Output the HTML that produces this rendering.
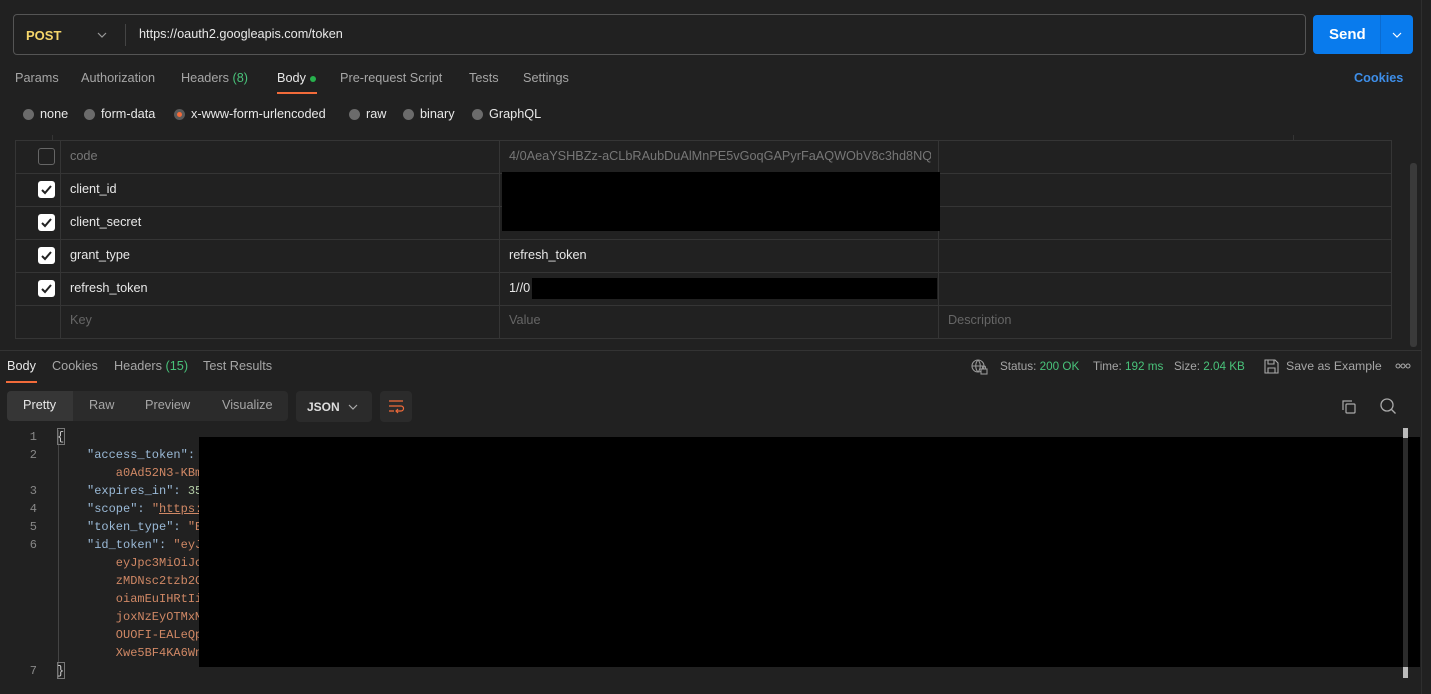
<!DOCTYPE html>
<html><head><meta charset="utf-8"><style>
*{margin:0;padding:0;box-sizing:border-box}
body{width:1431px;height:694px;background:#212121;font-family:"Liberation Sans",sans-serif;font-size:12.7px;color:#a6a6a6;position:relative;overflow:hidden}
.a{position:absolute;white-space:nowrap}
.w{color:#e8e8e8}
.g{color:#49c27a}
.mono{font-family:"Liberation Mono",monospace;font-size:12px}
.rad{position:absolute;width:11px;height:11px;border-radius:50%;background:#6b6b6b;top:109px}
.hl{position:absolute;left:15px;width:1377px;height:1px;background:#353535}
.vl{position:absolute;width:1px;background:#353535;top:140px;height:198px}
.cb{position:absolute;left:38px;width:17px;height:17px;border-radius:3px;background:#fff}
.cb svg{position:absolute;left:2px;top:2px}
.s{color:#d08865}
</style></head><body>
<div class="a" style="left:13px;top:14px;width:1293px;height:41px;border:1px solid #555;border-radius:4px"></div>
<div class="a" style="left:26px;top:28px;font-weight:bold;color:#f5d66a;font-size:13px">POST</div>
<svg class="a" style="left:97px;top:31px" width="10" height="8"><path d="M1 2l4 4 4-4" stroke="#999" fill="none" stroke-width="1.2"/></svg>
<div class="a" style="left:125px;top:24px;width:1px;height:22px;background:#444"></div>
<div class="a w" style="left:139px;top:27px">https://oauth2.googleapis.com/token</div>
<div class="a" style="left:1313px;top:15px;width:100px;height:39px;background:#097bed;border-radius:4px"></div>
<div class="a" style="left:1380px;top:15px;width:1px;height:39px;background:#0a6bd0"></div>
<div class="a" style="left:1329px;top:26px;color:#fff;font-weight:bold;font-size:15px">Send</div>
<svg class="a" style="left:1392px;top:31px" width="10" height="8"><path d="M1 2l4 4 4-4" stroke="#fff" fill="none" stroke-width="1.2"/></svg>
<div class="a" style="left:1421px;top:0;width:1px;height:694px;background:#2e2e2e"></div>
<div class="a" style="left:15px;top:71px">Params</div>
<div class="a" style="left:81px;top:71px">Authorization</div>
<div class="a" style="left:181px;top:71px">Headers <span class="g">(8)</span></div>
<div class="a w" style="left:277px;top:71px">Body</div>
<div class="a" style="left:310px;top:76px;width:6px;height:6px;border-radius:50%;background:#27b14d"></div>
<div class="a" style="left:277px;top:92px;width:40px;height:2px;background:#f26b3a"></div>
<div class="a" style="left:340px;top:71px">Pre-request Script</div>
<div class="a" style="left:469px;top:71px">Tests</div>
<div class="a" style="left:523px;top:71px">Settings</div>
<div class="a" style="left:1354px;top:71px;color:#3e8ee8;font-weight:bold">Cookies</div>
<div class="rad" style="left:23px"></div><div class="a w" style="left:40px;top:107px">none</div>
<div class="rad" style="left:84px"></div><div class="a w" style="left:101px;top:107px">form-data</div>
<div class="rad" style="left:174px;background:#5a5a5a"></div><div class="a" style="left:177px;top:112px;width:5px;height:5px;border-radius:50%;background:#f26b3a"></div><div class="a w" style="left:191px;top:107px">x-www-form-urlencoded</div>
<div class="rad" style="left:349px"></div><div class="a w" style="left:366px;top:107px">raw</div>
<div class="rad" style="left:403px"></div><div class="a w" style="left:420px;top:107px">binary</div>
<div class="rad" style="left:472px"></div><div class="a w" style="left:489px;top:107px">GraphQL</div>
<div class="hl" style="top:140px"></div><div class="hl" style="top:173px"></div><div class="hl" style="top:206px"></div><div class="hl" style="top:239px"></div><div class="hl" style="top:272px"></div><div class="hl" style="top:305px"></div><div class="hl" style="top:338px"></div>
<div class="vl" style="left:15px"></div><div class="vl" style="left:60px"></div><div class="vl" style="left:499px"></div><div class="vl" style="left:938px"></div><div class="vl" style="left:1391px"></div>
<div class="a" style="left:52px;top:135px;width:1px;height:5px;background:#353535"></div>
<div class="a" style="left:1293px;top:135px;width:1px;height:5px;background:#353535"></div>
<div class="a" style="left:38px;top:148px;width:17px;height:17px;border:1px solid #666;border-radius:3px"></div>
<div class="a" style="left:70px;top:149px;color:#777">code</div>
<div class="a" style="left:509px;top:149px;color:#777;width:422px;overflow:hidden">4/0AeaYSHBZz-aCLbRAubDuAlMnPE5vGoqGAPyrFaAQWObV8c3hd8NQ...</div>
<div class="cb" style="top:181px"><svg width="13" height="13"><path d="M2 7l3 3 6-7" stroke="#222" stroke-width="2" fill="none"/></svg></div>
<div class="cb" style="top:214px"><svg width="13" height="13"><path d="M2 7l3 3 6-7" stroke="#222" stroke-width="2" fill="none"/></svg></div>
<div class="cb" style="top:247px"><svg width="13" height="13"><path d="M2 7l3 3 6-7" stroke="#222" stroke-width="2" fill="none"/></svg></div>
<div class="cb" style="top:280px"><svg width="13" height="13"><path d="M2 7l3 3 6-7" stroke="#222" stroke-width="2" fill="none"/></svg></div>
<div class="a w" style="left:70px;top:182px">client_id</div>
<div class="a w" style="left:70px;top:215px">client_secret</div>
<div class="a w" style="left:70px;top:248px">grant_type</div>
<div class="a w" style="left:509px;top:248px">refresh_token</div>
<div class="a w" style="left:70px;top:281px">refresh_token</div>
<div class="a w" style="left:509px;top:281px">1//0</div>
<div class="a" style="left:70px;top:313px;color:#666">Key</div>
<div class="a" style="left:509px;top:313px;color:#666">Value</div>
<div class="a" style="left:948px;top:313px;color:#666">Description</div>
<div class="a" style="left:502px;top:172px;width:438px;height:59px;background:#000"></div>
<div class="a" style="left:532px;top:278px;width:405px;height:21px;background:#000"></div>
<div class="a" style="left:1410px;top:163px;width:7px;height:184px;border-radius:3px;background:#3a3a3a"></div>
<div class="a" style="left:0;top:350px;width:1421px;height:1px;background:#333"></div>
<div class="a w" style="left:7px;top:359px">Body</div>
<div class="a" style="left:6px;top:381px;width:31px;height:2px;background:#f26b3a"></div>
<div class="a" style="left:52px;top:359px">Cookies</div>
<div class="a" style="left:114px;top:359px">Headers <span class="g">(15)</span></div>
<div class="a" style="left:203px;top:359px">Test Results</div>
<svg class="a" style="left:971px;top:359px" width="17" height="16" fill="none" stroke="#999" stroke-width="1.1"><circle cx="7" cy="7" r="6"/><path d="M1 7h12M7 1c-3 3-3 9 0 12M7 1c3 3 3 9 0 12"/><rect x="10" y="10" width="6" height="5" fill="#212121"/><path d="M11.5 10V8.5a1.5 1.5 0 013 0V10"/></svg>
<div class="a" style="left:1000px;top:360px;font-size:11.7px">Status: <span class="g">200 OK</span></div>
<div class="a" style="left:1093px;top:360px;font-size:11.7px">Time: <span class="g">192 ms</span></div>
<div class="a" style="left:1174px;top:360px;font-size:11.7px">Size: <span class="g">2.04 KB</span></div>
<svg class="a" style="left:1264px;top:359px" width="15" height="15" fill="none" stroke="#aaa" stroke-width="1.1"><path d="M1 1h10l3 3v10H1z"/><path d="M4 1v4h6V1M4 14V9h7v5"/></svg>
<div class="a" style="left:1286px;top:359px;font-size:12.3px">Save as Example</div>
<svg class="a" style="left:1395px;top:363px" width="16" height="6" fill="none" stroke="#aaa" stroke-width="1"><circle cx="3" cy="3" r="2"/><circle cx="8" cy="3" r="2"/><circle cx="13" cy="3" r="2"/></svg>
<div class="a" style="left:7px;top:391px;width:281px;height:30px;background:#2b2b2b;border-radius:4px"></div>
<div class="a" style="left:7px;top:391px;width:66px;height:30px;background:#363636;border-radius:4px 0 0 4px"></div>
<div class="a w" style="left:23px;top:398px">Pretty</div>
<div class="a" style="left:89px;top:398px">Raw</div>
<div class="a" style="left:145px;top:398px">Preview</div>
<div class="a" style="left:222px;top:398px">Visualize</div>
<div class="a" style="left:296px;top:391px;width:76px;height:31px;background:#2b2b2b;border-radius:4px"></div>
<div class="a w" style="left:307px;top:400px;font-size:12px;font-weight:bold;color:#ddd">JSON</div>
<svg class="a" style="left:348px;top:403px" width="10" height="8"><path d="M1 2l4 4 4-4" stroke="#aaa" fill="none" stroke-width="1.2"/></svg>
<div class="a" style="left:380px;top:391px;width:32px;height:31px;background:#2b2b2b;border-radius:4px"></div>
<svg class="a" style="left:388px;top:399px" width="17" height="15" fill="none" stroke="#f26b3a" stroke-width="1.2"><path d="M1 2h14M1 7h12a2.5 2.5 0 010 5H9M1 12h5M10 10l-2 2 2 2"/></svg>
<svg class="a" style="left:1341px;top:399px" width="16" height="16" fill="none" stroke="#aaa" stroke-width="1.2"><rect x="5" y="5" width="9" height="9" rx="1"/><path d="M2 11V2h9"/></svg>
<svg class="a" style="left:1380px;top:398px" width="17" height="17" fill="none" stroke="#aaa" stroke-width="1.3"><circle cx="7" cy="7" r="6"/><path d="M11.5 11.5l4 4"/></svg>
<div class="a" style="left:58px;top:430px;width:1px;height:248px;background:#444"></div>
<div class="a mono" style="left:20px;top:428px;line-height:18px;color:#888;text-align:right;width:17px">1<br>2<br><br>3<br>4<br>5<br>6<br><br><br><br><br><br><br>7</div>
<div class="a mono" style="left:57px;top:428px;line-height:18px;color:#ccc">{</div>
<div class="a mono" style="left:57px;top:662px;line-height:18px;color:#ccc">}</div>
<div class="a" style="left:57px;top:428px;width:8px;height:17px;border:1px solid #777"></div>
<div class="a" style="left:57px;top:662px;width:8px;height:17px;border:1px solid #777"></div>
<div class="a mono" style="left:87px;top:446px;line-height:18px;color:#9ab9d6">"access_token":<br><span class="s">&nbsp;&nbsp;&nbsp;&nbsp;a0Ad52N3-KBm</span><br>"expires_in": <span style="color:#b5cea8">35</span><br>"scope": <span class="s">"<u>https:</u></span><br>"token_type": <span class="s">"E</span><br>"id_token": <span class="s">"eyJ</span><br><span class="s">&nbsp;&nbsp;&nbsp;&nbsp;eyJpc3MiOiJc<br>&nbsp;&nbsp;&nbsp;&nbsp;zMDNsc2tzb2C<br>&nbsp;&nbsp;&nbsp;&nbsp;oiamEuIHRtIi<br>&nbsp;&nbsp;&nbsp;&nbsp;joxNzEyOTMxM<br>&nbsp;&nbsp;&nbsp;&nbsp;OUOFI-EALeQp<br>&nbsp;&nbsp;&nbsp;&nbsp;Xwe5BF4KA6Wn</span></div>
<div class="a" style="left:199px;top:437px;width:1221px;height:230px;background:#000"></div>
<div class="a" style="left:1403px;top:428px;width:5px;height:250px;background:#2b2b2b"></div>
<div class="a" style="left:1403px;top:428px;width:5px;height:10px;background:#bbb"></div>
<div class="a" style="left:1403px;top:667px;width:5px;height:11px;background:#bbb"></div>
</body></html>
